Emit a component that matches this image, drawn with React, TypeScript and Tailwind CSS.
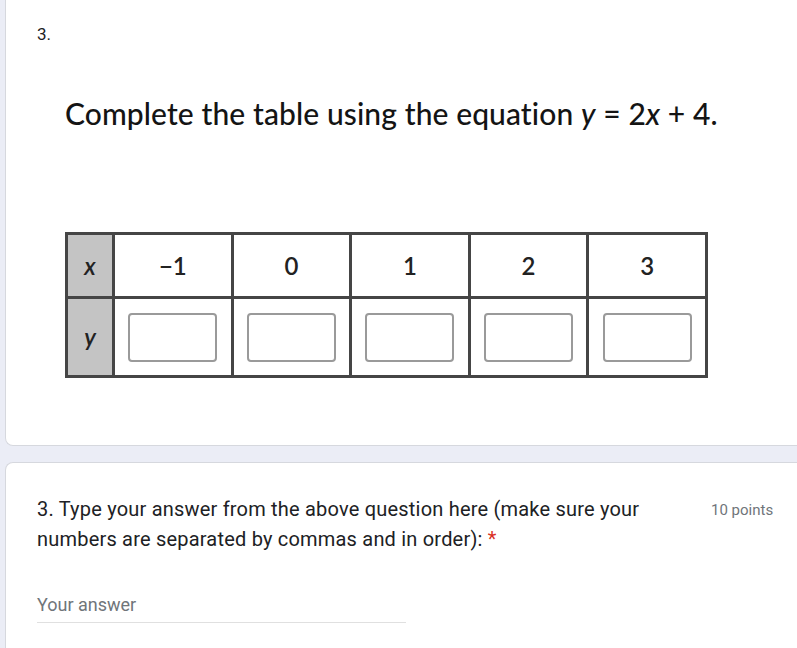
import React from "react";

const cols = ["\u22121", "0", "1", "2", "3"];

export default function App() {
  return (
    <div className="w-[797px] h-[648px] overflow-hidden bg-[#ebedf6] pl-[5px]" style={{ fontFamily: "Roboto, 'Liberation Sans', sans-serif" }}>
      <div className="h-[446px] bg-white border-l border-b border-[#d6d8de] rounded-bl-[8px] pl-[31px] pt-[22px]">
        <div className="text-[17px] text-[#202124] leading-[24px]">3.</div>
        <div className="pl-[28px] pt-[47px]">
          <div
            className="text-[30px] leading-[40px] text-[#141414] font-medium tracking-[0.1px] whitespace-nowrap"
            style={{ fontFamily: "Lato, 'Open Sans', sans-serif" }}
          >
            Complete the table using the equation <i>y</i> = 2<i>x</i> + 4.
          </div>
          <div className="mt-[99px] w-[643px] border-[3px] border-[#454545] flex flex-col" style={{ fontFamily: "Lato, 'Open Sans', sans-serif" }}>
            <div className="flex h-[64px] border-b-[3px] border-[#454545]">
              <div className="w-[47px] bg-[#c4c4c4] border-r-[3px] border-[#454545] flex items-center justify-center text-[24px] font-semibold italic text-[#222]">x</div>
              {cols.map((c, i) => (
                <div key={i} className={`flex-1 flex items-center justify-center text-[24px] font-semibold text-[#222] ${i < 4 ? "border-r-[3px] border-[#454545]" : ""}`}>
                  {c}
                </div>
              ))}
            </div>
            <div className="flex h-[76px]">
              <div className="w-[47px] bg-[#c4c4c4] border-r-[3px] border-[#454545] flex items-center justify-center text-[24px] font-semibold italic text-[#222]">y</div>
              {cols.map((c, i) => (
                <div key={i} className={`flex-1 flex items-center justify-center ${i < 4 ? "border-r-[3px] border-[#454545]" : ""}`}>
                  <div className="w-[89px] h-[49px] border-2 border-[#9a9a9a] rounded-[4px]" />
                </div>
              ))}
            </div>
          </div>
        </div>
      </div>
      <div className="mt-[16px] h-[200px] bg-white border-l border-t border-[#d6d8de] rounded-tl-[8px] pl-[31px] pt-[31px]">
        <div className="flex">
          <div className="w-[640px] text-[20px] leading-[30px] tracking-[0.2px] text-[#202124]">
            3. Type your answer from the above question here (make sure your numbers are separated by commas and in order): <span className="text-[#d93025]">*</span>
          </div>
          <div className="ml-[34px] pt-[1px] text-[15px] leading-[30px] text-[#70757a]">10 points</div>
        </div>
        <div className="mt-[39px] w-[369px] border-b border-[#e0e0e0] pb-[5px] text-[18px] leading-[24px] text-[#70757a]">Your answer</div>
      </div>
    </div>
  );
}
